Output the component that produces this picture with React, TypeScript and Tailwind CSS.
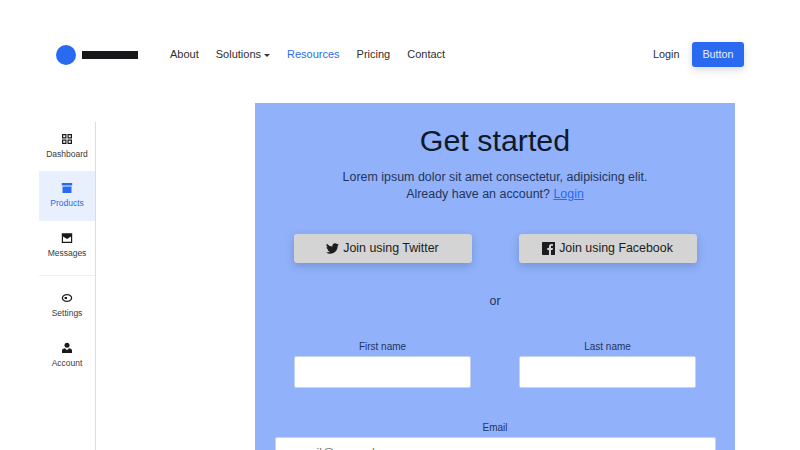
import React from "react";

const Nav = ({ label, active, caret }: { label: string; active?: boolean; caret?: boolean }) => (
  <a className={`flex items-center gap-[3px] text-[11px] leading-[20px] ${active ? "text-[#2a6af0]" : "text-[#2e2e2e]"}`}>
    {label}
    {caret && <span className="mt-[2px] h-0 w-0 border-x-[3px] border-t-[3px] border-x-transparent border-t-[#333]" />}
  </a>
);

const Side = ({ label, active, icon }: { label: string; active?: boolean; icon: React.ReactNode }) => (
  <div className={`flex h-[49.5px] w-full shrink-0 flex-col items-center justify-center gap-[3px] pt-px ${active ? "bg-[#e9f0fd] text-[#2a6af0]" : "text-[#3a3a3a]"}`}>
    <svg viewBox="0 0 12 12" className={`h-3 w-3 ${active ? "text-[#2a6af0]" : "text-[#1a1a1a]"}`} fill="currentColor">{icon}</svg>
    <span className="text-[8.5px] leading-[13px]">{label}</span>
  </div>
);

const Field = ({ label }: { label: string }) => (
  <div className="flex w-[177px] flex-col items-center">
    <label className="text-[10px] leading-[16px] text-[#24345c]">{label}</label>
    <input className="mt-[0.5px] h-[32px] w-full rounded-[2px] border border-[#c4d3f0] bg-white" />
  </div>
);

export default function App() {
  return (
    <div className="h-[450px] w-[800px] overflow-hidden bg-white font-['Liberation_Sans',sans-serif]">
      <header className="flex h-[102.5px] items-start justify-between px-[56px] pt-[42px]">
        <div className="flex h-[25px] items-center">
          <div className="h-5 w-5 rounded-full bg-[#2a6af0]" />
          <div className="ml-[6px] h-2 w-[56px] bg-[#18181b]" />
          <nav className="ml-[32px] -mt-px flex items-center gap-[17px]">
            <Nav label="About" />
            <Nav label="Solutions" caret />
            <Nav label="Resources" active />
            <Nav label="Pricing" />
            <Nav label="Contact" />
          </nav>
        </div>
        <div className="flex items-center gap-[12.500px]">
          <span className="text-[10.800px] text-[#2e2e2e]">Login</span>
          <button className="h-[25px] w-[52px] rounded-[3px] bg-[#2a6af0] text-[10.800px] text-[#e6eeff] shadow-[0_3px_8px_rgba(0,0,0,0.15)]">Button</button>
        </div>
      </header>

      <div className="flex items-start">
        <aside className="ml-[39px] mt-[19px] flex h-[400px] w-[57px] flex-col border-r border-[#dddddd]">
          <Side label="Dashboard" icon={<path d="M1 1h4.500v4.500H1zM2.200 2.200v2.100h2.100V2.200zM6.500 1H11v4.500H6.500zM7.700 2.200v2.100h2.100V2.200zM1 6.500h4.500V11H1zM2.200 7.700v2.100h2.100V7.700zM6.500 6.500H11V11H6.500zM7.700 7.700v2.100h2.100V7.700z" fillRule="evenodd" />} />
          <Side label="Products" active icon={<path d="M.8 1h10.400v2.400H.8zM1.500 4.500h9V11h-9z" />} />
          <Side label="Messages" icon={<path d="M.8 1.200h10.400V11H.8zM2 4.500v5.300h8V4.500L6 7z" fillRule="evenodd" />} />
          <div className="my-[5px] h-px w-full shrink-0 bg-[#f0f0f0]" />
          <Side label="Settings" icon={<path d="M6 2a5.200 4 0 1 1-.01 0zM6 3.200a3.900 2.800 0 1 0 .01 0zM3.600 5h2.400v2H3.600z" fillRule="evenodd" />} />
          <Side label="Account" icon={<><circle cx="6" cy="3.300" r="2.500" /><path d="M1 11V8.500C1 7.200 2.500 6.500 4 6.300l2 2 2-2c1.500.2 3 .9 3 2.200V11z" /></>} />
        </aside>

        <main className="ml-[159px] flex h-[600px] w-[480px] flex-col items-center bg-[#91b2fa] px-[20px] pt-[19px] text-[#24345c]">
          <h1 className="text-[30.400px] leading-[36px] text-[#10182b]">Get started</h1>
          <p className="mt-[11.500px] text-center text-[12.450px] leading-[17px]">
            Lorem ipsum dolor sit amet consectetur, adipisicing elit.<br />
            Already have an account? <a className="text-[#2a6af0] underline">Login</a>
          </p>
          <div className="mt-[30.500px] flex w-[403px] justify-between">
            <button className="flex h-[29px] w-[178px] items-center justify-center gap-[4px] rounded-[3px] bg-[#d4d4d4] text-[12.400px] text-[#1c1c20] shadow-[0_3px_8px_rgba(30,50,100,0.25)]">
              <svg viewBox="0 0 24 24" className="h-[13px] w-[13px]" fill="currentColor"><path d="M24 4.600a9.800 9.800 0 0 1-2.800.8 4.900 4.900 0 0 0 2.200-2.700 9.800 9.800 0 0 1-3.100 1.200A4.900 4.900 0 0 0 11.900 8.300 14 14 0 0 1 1.700 3.100a4.900 4.900 0 0 0 1.500 6.600 4.900 4.900 0 0 1-2.200-.6c0 2.400 1.700 4.400 3.900 4.900a4.900 4.900 0 0 1-2.200.1 4.900 4.900 0 0 0 4.600 3.400A9.900 9.900 0 0 1 0 19.500 14 14 0 0 0 21.500 7.100 10 10 0 0 0 24 4.600z" /></svg>
              Join using Twitter
            </button>
            <button className="flex h-[29px] w-[178px] items-center justify-center gap-[4px] rounded-[3px] bg-[#d4d4d4] text-[12.400px] text-[#1c1c20] shadow-[0_3px_8px_rgba(30,50,100,0.25)]">
              <svg viewBox="0 0 24 24" className="h-[13px] w-[13px]" fill="currentColor"><path d="M1.500 0A1.500 1.500 0 0 0 0 1.500v21A1.500 1.500 0 0 0 1.500 24h11.300v-9.300H9.700V11h3.100V8.400c0-3.100 1.900-4.800 4.700-4.800 1.300 0 2.500.1 2.800.1v3.200h-1.900c-1.500 0-1.800.7-1.800 1.800V11h3.600l-.5 3.700h-3.100V24h6.100a1.500 1.500 0 0 0 1.500-1.500v-21A1.500 1.500 0 0 0 22.500 0z" /></svg>
              Join using Facebook
            </button>
          </div>
          <div className="mt-[28px] text-[12.400px] leading-[20px]">or</div>
          <div className="mt-[28.500px] flex w-[402px] justify-between">
            <Field label="First name" />
            <Field label="Last name" />
          </div>
          <label className="mt-[32px] text-[10px] leading-[16px]">Email</label>
          <input readOnly placeholder="email@example.com" className="mt-[1px] h-[32px] w-[441px] shrink-0 rounded-[2px] border border-[#c4d3f0] bg-white pl-[17px] text-[12.400px] placeholder:text-[#777]" />
        </main>
      </div>
    </div>
  );
}
